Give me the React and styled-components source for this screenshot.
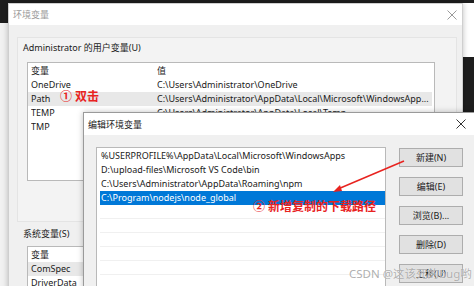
import styled, { createGlobalStyle } from "styled-components";

const GlobalStyle = createGlobalStyle`
  html, body {
    margin: 0;
    padding: 0;
    background: #1e1e1e;
  }
  * {
    box-sizing: border-box;
  }
`;

const FONT = `"Noto Sans", "Noto Sans CJK SC", sans-serif`;

const Desktop = styled.div`
  position: relative;
  width: 474px;
  height: 286px;
  overflow: hidden;
  background: #1e1e1e;
  font-family: ${FONT};
  font-size: 9px;
  color: #1a1a1a;
`;

const BackWindow = styled.div`
  position: absolute;
  left: ${(p) => p.left}px;
  top: ${(p) => p.top}px;
  width: ${(p) => p.width}px;
  height: ${(p) => p.height}px;
  background: ${(p) => p.bg};
`;

const Window = styled.div`
  position: absolute;
  left: ${(p) => p.left}px;
  top: ${(p) => p.top}px;
  width: ${(p) => p.width}px;
  height: ${(p) => p.height}px;
  background: #f0f0f0;
  border: 1px solid ${(p) => (p.active ? "#9a9a9a" : "#cfcfcf")};
  box-shadow: 0 0 6px rgba(0, 0, 0, 0.25);
  display: flex;
  flex-direction: column;
`;

const TitleBar = styled.div`
  height: ${(p) => p.h}px;
  flex-shrink: 0;
  background: #ffffff;
  display: flex;
  align-items: center;
  justify-content: space-between;
  padding: 0 ${(p) => p.padRight}px 0 4px;
  color: ${(p) => (p.active ? "#1a1a1a" : "#9a9a9a")};
`;

const CloseIcon = ({ color }) => (
  <svg width="10" height="10" viewBox="0 0 10 10">
    <path d="M0.5 0.5 L9.5 9.5 M9.5 0.5 L0.5 9.5" stroke={color} strokeWidth="1" />
  </svg>
);

const OuterBody = styled.div`
  flex: 1;
  display: flex;
  flex-direction: column;
  padding: 12px 5px 0 8px;
`;

const Panel = styled.div`
  height: 185px;
  border: 1px solid #e4e4e4;
  background: #f3f3f3;
  padding: 3px 18px 0 5px;
  display: flex;
  flex-direction: column;
`;

const GroupLabel = styled.div`
  line-height: 14px;
  height: 14px;
  white-space: nowrap;
`;

const ListBox = styled.div`
  margin-top: ${(p) => p.mt}px;
  margin-left: ${(p) => p.ml || 0}px;
  width: ${(p) => p.width}px;
  height: ${(p) => p.height}px;
  background: #ffffff;
  border: 1px solid #b9b9b9;
  overflow: hidden;
  flex-shrink: 0;
`;

const VarRow = styled.div`
  display: grid;
  grid-template-columns: 126px 1fr;
  height: ${(p) => (p.header ? 15 : 14)}px;
  line-height: ${(p) => (p.header ? 15 : 14)}px;
  padding-left: 3px;
  white-space: nowrap;
  background: ${(p) => (p.hover ? "#e8e8e8" : "transparent")};
  margin-right: 2px;
`;

const Cell = styled.span`
  overflow: hidden;
  text-overflow: ellipsis;
`;

const SysLabel = styled(GroupLabel)`
  margin-top: 5px;
  margin-left: 6px;
`;

const InnerBody = styled.div`
  flex: 1;
  display: flex;
  gap: 13px;
  padding: 12px 0 0 12px;
`;

const PathList = styled.div`
  width: 290px;
  height: 150px;
  background: #ffffff;
  border: 1px solid #b9b9b9;
  padding: 1px 0 0 3px;
  flex-shrink: 0;
`;

const PathRow = styled.div`
  height: 14px;
  line-height: 14px;
  padding-left: 1px;
  white-space: nowrap;
  background: ${(p) => (p.selected ? "#0078d7" : "transparent")};
  color: ${(p) => (p.selected ? "#ffffff" : "#1a1a1a")};
  border-bottom: ${(p) => (p.empty ? "1px solid #f0f0f0" : "none")};
`;

const ButtonColumn = styled.div`
  display: flex;
  flex-direction: column;
  gap: 10px;
  padding-top: 1px;
`;

const Button = styled.div`
  width: 64px;
  height: 19px;
  background: #e1e1e1;
  border: 1px solid #adadad;
  display: flex;
  align-items: center;
  justify-content: center;
  white-space: nowrap;
`;

const Note = styled.div`
  position: absolute;
  left: ${(p) => p.left}px;
  top: ${(p) => p.top}px;
  color: #e8231f;
  font-weight: bold;
  font-size: 12px;
  line-height: 16px;
  white-space: nowrap;
`;

const Arrow = styled.svg`
  position: absolute;
  left: 0;
  top: 0;
  pointer-events: none;
`;

const Watermark = styled.div`
  position: absolute;
  left: 349px;
  top: 266px;
  font-size: 11.5px;
  line-height: 16px;
  color: rgba(165, 165, 165, 0.9);
  text-shadow: 0 0 1px rgba(255, 255, 255, 0.9);
  white-space: nowrap;
`;

const userVars = [
  ["OneDrive", "C:\\Users\\Administrator\\OneDrive"],
  ["Path", "C:\\Users\\Administrator\\AppData\\Local\\Microsoft\\WindowsApp..."],
  ["TEMP", "C:\\Users\\Administrator\\AppData\\Local\\Temp"],
  ["TMP", "C:\\Users\\Administrator\\AppData\\Local\\Temp"],
];

const sysVars = [
  ["ComSpec", "C:\\Windows\\system32\\cmd.exe"],
  ["DriverData", "C:\\Windows\\System32\\Drivers\\DriverData"],
];

const paths = [
  "%USERPROFILE%\\AppData\\Local\\Microsoft\\WindowsApps",
  "D:\\upload-files\\Microsoft VS Code\\bin",
  "C:\\Users\\Administrator\\AppData\\Roaming\\npm",
  "C:\\Program\\nodejs\\node_global",
];

const buttons = ["新建(N)", "编辑(E)", "浏览(B)...", "删除(D)", "上移(U)"];

export default function App() {
  return (
    <Desktop>
      <GlobalStyle />
      <BackWindow left={0} top={23} width={10} height={263} bg="#f2f2f2" />
      <BackWindow left={460} top={3} width={14} height={54} bg="#ffffff" />

      <Window left={8} top={3} width={455} height={300}>
        <TitleBar h={21} padRight={5}>
          <span>环境变量</span>
          <CloseIcon color="#9a9a9a" />
        </TitleBar>
        <OuterBody>
          <Panel>
            <GroupLabel>Administrator 的用户变量(U)</GroupLabel>
            <ListBox mt={7} ml={4} width={408} height={119}>
              <VarRow header>
                <Cell>变量</Cell>
                <Cell>值</Cell>
              </VarRow>
              {userVars.map(([k, v]) => (
                <VarRow key={k} hover={k === "Path"}>
                  <Cell>{k}</Cell>
                  <Cell>{v}</Cell>
                </VarRow>
              ))}
            </ListBox>
          </Panel>
          <SysLabel>系统变量(S)</SysLabel>
          <ListBox mt={5} ml={10} width={408} height={60}>
            <VarRow header>
              <Cell>变量</Cell>
              <Cell>值</Cell>
            </VarRow>
            {sysVars.map(([k, v]) => (
              <VarRow key={k} hover={k === "ComSpec"}>
                <Cell>{k}</Cell>
                <Cell>{v}</Cell>
              </VarRow>
            ))}
          </ListBox>
        </OuterBody>
      </Window>

      <Window left={83} top={112} width={400} height={190} active>
        <TitleBar h={22} padRight={16} active>
          <span>编辑环境变量</span>
          <CloseIcon color="#333333" />
        </TitleBar>
        <InnerBody>
          <PathList>
            {paths.map((p, i) => (
              <PathRow key={p} selected={i === 3}>
                {p}
              </PathRow>
            ))}
            {[0, 1, 2, 3, 4, 5].map((i) => (
              <PathRow key={"e" + i} empty />
            ))}
          </PathList>
          <ButtonColumn>
            {buttons.map((b) => (
              <Button key={b}>{b}</Button>
            ))}
          </ButtonColumn>
        </InnerBody>
      </Window>

      <Note left={60} top={89}>① 双击</Note>
      <Note left={253} top={199}>② 新增复制的下载路径</Note>

      <Arrow width="474" height="286" viewBox="0 0 474 286">
        <line x1="404" y1="161" x2="338" y2="189" stroke="#e8231f" strokeWidth="1.5" />
        <path d="M333 192 L340 185 L342 191 Z" fill="#e8231f" />
      </Arrow>

      <Watermark>CSDN @这该死的bug哟</Watermark>
    </Desktop>
  );
}
